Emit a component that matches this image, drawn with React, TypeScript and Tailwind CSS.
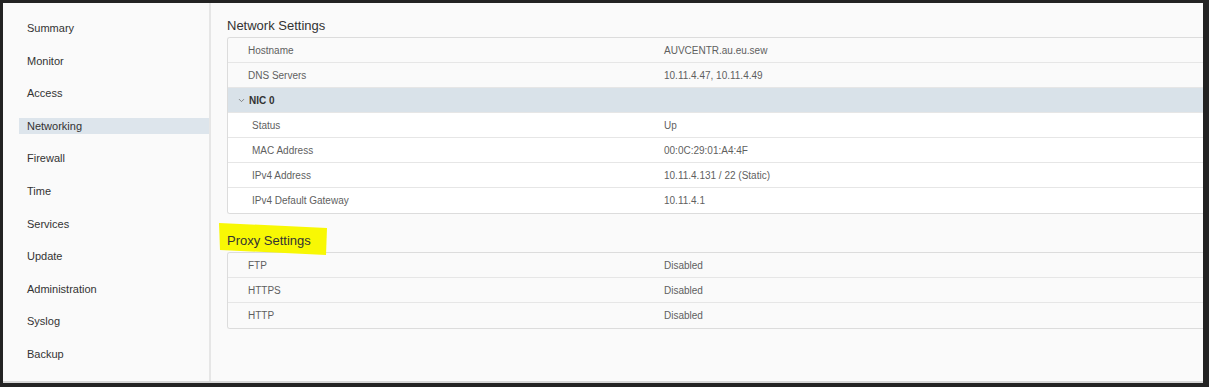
import { ChevronDown } from 'lucide-react'

const navItems = [
  'Summary',
  'Monitor',
  'Access',
  'Networking',
  'Firewall',
  'Time',
  'Services',
  'Update',
  'Administration',
  'Syslog',
  'Backup',
]

const topRows = [
  { label: 'Hostname', value: 'AUVCENTR.au.eu.sew' },
  { label: 'DNS Servers', value: '10.11.4.47, 10.11.4.49' },
]

const nicRows = [
  { label: 'Status', value: 'Up' },
  { label: 'MAC Address', value: '00:0C:29:01:A4:4F' },
  { label: 'IPv4 Address', value: '10.11.4.131 / 22 (Static)' },
  { label: 'IPv4 Default Gateway', value: '10.11.4.1' },
]

const proxyRows = [
  { label: 'FTP', value: 'Disabled' },
  { label: 'HTTPS', value: 'Disabled' },
  { label: 'HTTP', value: 'Disabled' },
]

function Row({ label, value, nested, bg }: { label: string; value: string; nested?: boolean; bg: string }) {
  return (
    <div className={`flex h-[25px] items-center border-b border-[#e6e6e6] last:border-b-0 text-[10px] text-[#5f5f5f] ${bg}`}>
      <span className={nested ? 'w-[436px] pl-[24px]' : 'w-[436px] pl-[20px]'}>{label}</span>
      <span>{value}</span>
    </div>
  )
}

export default function App() {
  return (
    <div
      className="h-[387px] w-full overflow-hidden bg-[#232323] pt-[3px] pl-[3px] pr-[6px] pb-[4px]"
      style={{ fontFamily: '"Liberation Sans", Arial, sans-serif' }}
    >
      <div className="flex h-full overflow-hidden bg-[#fafafa] border-b-2 border-[#d6d6d6]">
        {/* sidebar */}
        <nav className="w-[208px] shrink-0 border-r-2 border-[#e6e6e6] pt-[9px]">
          {navItems.map((item) => (
            <div key={item} className="flex h-[32.6px] items-center pl-[16px]">
              <span
                className={`flex h-[16px] w-full items-center pl-[8px] text-[11px] text-[#333] ${
                  item === 'Networking' ? 'bg-[#dde5ec] text-[#222]' : ''
                }`}
              >
                {item}
              </span>
            </div>
          ))}
        </nav>

        {/* main */}
        <main className="flex-1 min-w-0 pl-[16px] pt-[14px]">
          <h2 className="mb-[2px] text-[13px] leading-[18px] text-[#333]">Network Settings</h2>
          <div className="-mr-[4px] overflow-hidden rounded-l-[3px] border border-r-0 border-[#dcdcdc]">
            {topRows.map((r) => (
              <Row key={r.label} {...r} bg="bg-[#fafafa]" />
            ))}
            <div className="flex h-[25px] items-center border-b border-[#e6e6e6] bg-[#d9e2e9] pl-[9px] text-[10px] font-semibold text-[#333]">
              <ChevronDown className="mr-[3px] h-[9px] w-[9px] text-[#666]" strokeWidth={2} />
              NIC 0
            </div>
            {nicRows.map((r) => (
              <Row key={r.label} {...r} nested bg="bg-white" />
            ))}
          </div>

          <div className="relative mt-[18px] mb-[2px] inline-block">
            <svg
              className="absolute left-[-8px] top-[-9px]"
              width="108"
              height="32"
              viewBox="0 0 108 32"
            >
              <polygon points="0,0 108,5 107,32 1,27" fill="#f8f804" />
            </svg>
            <h2 className="relative text-[13px] leading-[18px] text-[#333]">Proxy Settings</h2>
          </div>
          <div className="-mr-[4px] overflow-hidden rounded-l-[3px] border border-r-0 border-[#dcdcdc]">
            {proxyRows.map((r) => (
              <Row key={r.label} {...r} bg="bg-[#fafafa]" />
            ))}
          </div>
        </main>
      </div>
    </div>
  )
}
